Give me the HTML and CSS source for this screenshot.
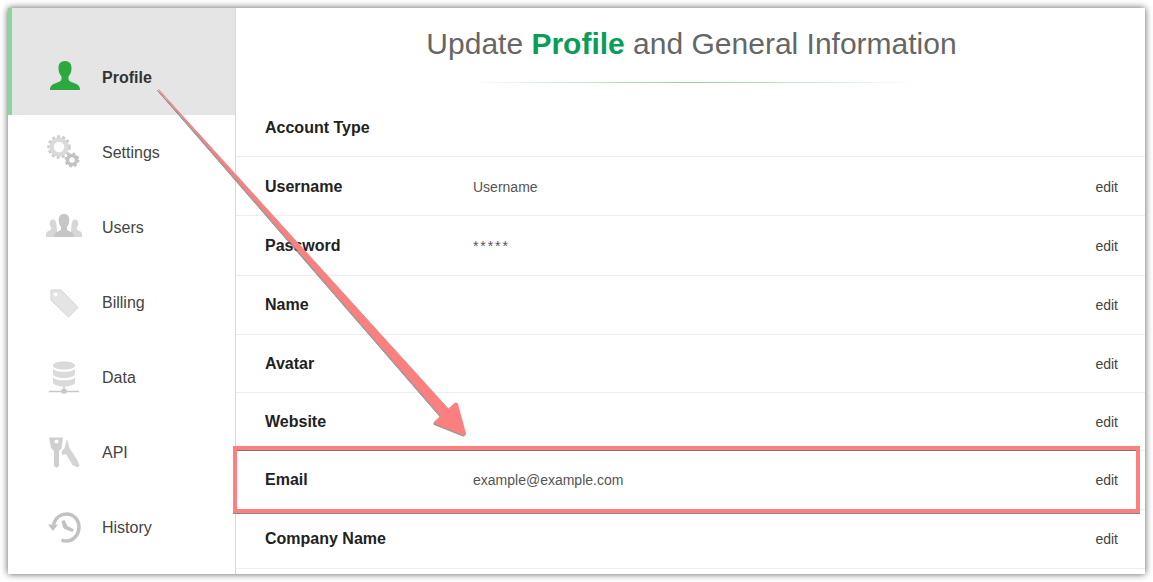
FILE: index.html
```html
<!DOCTYPE html>
<html lang="en">
<head>
    <meta charset="UTF-8">
    <meta name="viewport" content="width=device-width, initial-scale=1.0">
    <title>Update Profile</title>
    <link rel="stylesheet" href="styles.css">
</head>
<body>
    <div class="window">
        <!-- sidebar -->
        <div class="sidebar">
            <div class="nav-item active">
                <svg class="nav-icon" viewBox="0 0 36 36"><path fill="#2ca83f" d="M19 1c-4.600 0-6.500 3-6.500 7 0 3.500 1 6.500 3 8.500v2.500c0 2-2.500 3-6 4.300-3.500 1.300-5.500 2.700-5.500 6.700h30c0-4-2-5.400-5.500-6.700-3.500-1.300-6-2.300-6-4.300v-2.500c2-2 3-5 3-8.500 0-4-1.900-7-6.500-7z"/></svg>
                <span>Profile</span>
            </div>
            <div class="nav-item">
                <svg class="nav-icon" viewBox="0 0 36 36">
                    <circle cx="13" cy="12" r="7.500" fill="none" stroke="#dadada" stroke-width="4.500"/>
                    <circle cx="13" cy="12" r="10.500" fill="none" stroke="#cdcdcd" stroke-width="2.500" stroke-dasharray="3 2.250"/>
                    <circle cx="26" cy="25" r="4.500" fill="none" stroke="#c2c2c2" stroke-width="3.500"/>
                    <circle cx="26" cy="25" r="6.500" fill="none" stroke="#c2c2c2" stroke-width="2" stroke-dasharray="2.500 2.600"/>
                </svg>
                <span>Settings</span>
            </div>
            <div class="nav-item">
                <svg class="nav-icon" viewBox="0 0 36 36">
                    <path fill="#d6d6d6" d="M7 9.500c-2.300 0-3.300 1.800-3.300 3.800 0 1.800.5 3.200 1.400 4.200v1.500c0 1-1.700 1.600-3 2.200C.7 21.800 0 22.600 0 24.500V27h11v-7l-.5-5c0-3-1.500-5.500-3.500-5.500zM29 9.500c2.300 0 3.300 1.800 3.300 3.800 0 1.800-.5 3.200-1.400 4.200v1.500c0 1 1.700 1.600 3 2.200 1.400.6 2.100 1.400 2.100 3.300V27H25v-7l.5-5c0-3 1.500-5.500 3.500-5.500z"/>
                    <path fill="#c6c6c6" d="M18 4c-3.800 0-5.300 2.700-5.300 6 0 3 .8 5.300 2.300 6.800v2.200c0 1.500-2 2.100-3.800 2.900-2 .9-3.200 2-3.200 5.100h20c0-3.100-1.200-4.200-3.200-5.100-1.800-.8-3.800-1.400-3.800-2.900v-2.200c1.500-1.500 2.300-3.800 2.300-6.800 0-3.300-1.500-6-5.300-6z"/>
                </svg>
                <span>Users</span>
            </div>
            <div class="nav-item">
                <svg class="nav-icon" viewBox="0 0 36 36"><path fill="#e4e4e4" stroke="#d2d2d2" stroke-linejoin="round" d="M5 5h10l17 17.500L22.500 32 5 15z"/><circle cx="9.500" cy="9.500" r="2" fill="#fff"/></svg>
                <span>Billing</span>
            </div>
            <div class="nav-item">
                <svg class="nav-icon" viewBox="0 0 36 36">
                    <path fill="#dadada" d="M7 5.500C7 3 12 1.500 18 1.500S29 3 29 5.500 24 9.500 18 9.500 7 8 7 5.500zM7 9c2 2 6.500 2.800 11 2.800S27 11 29 9v5c0 2.300-5 4-11 4S7 16.300 7 14zM7 17.500c2 2 6.500 2.800 11 2.800s9-.8 11-2.800v5c0 2.300-5 4-11 4s-11-1.700-11-4z"/>
                    <path fill="none" stroke="#c8c8c8" stroke-width="1.500" d="M3 31.500h30M18 26v5"/>
                    <rect x="15.500" y="29" width="5" height="4.500" fill="#c8c8c8"/>
                </svg>
                <span>Data</span>
            </div>
            <div class="nav-item">
                <svg class="nav-icon" viewBox="0 0 36 36">
                    <path fill="#cfcfcf" d="M3 2.500h14l-1.500 11-2.500 2.500V31l-2.500 2L8 31V16l-3-3z"/>
                    <circle cx="10.500" cy="6.500" r="2" fill="#fff"/>
                    <path fill="#d4d4d4" d="M21 4l2.500 9 7.500 11.500 2.500 6-2 2-5-2.500-6.500-11-3.500 1-1-3.500 3-3.500z"/>
                </svg>
                <span>API</span>
            </div>
            <div class="nav-item">
                <svg class="nav-icon" viewBox="0 0 36 36">
                    <path fill="none" stroke="#c2c2c2" stroke-width="3.500" d="M7.500 14.500C9.500 7.500 15 4 20.500 4 27.500 4 33 9.700 33 17s-5.500 14-12.500 14c-2 0-3.500-.3-5-1"/>
                    <path fill="#c2c2c2" d="M2 14.500h10L7 21zM15.500 11l3-1 3 6 6.500 3.500-1.500 2.500-8-3-1.500-1.500z"/>
                </svg>
                <span>History</span>
            </div>
        </div>

        <!-- main content -->
        <div class="content">
            <div class="page-head">
                <h1>Update <b>Profile</b> and General Information</h1>
                <div class="head-line"></div>
            </div>
            <div class="row"><div class="row-label">Account Type</div></div>
            <div class="row"><div class="row-label">Username</div><div class="row-value">Username</div><a class="row-edit">edit</a></div>
            <div class="row row-tall"><div class="row-label">Password</div><div class="row-value row-stars">*****</div><a class="row-edit">edit</a></div>
            <div class="row row-up"><div class="row-label">Name</div><div class="row-value"></div><a class="row-edit">edit</a></div>
            <div class="row row-short"><div class="row-label">Avatar</div><div class="row-value"></div><a class="row-edit">edit</a></div>
            <div class="row row-short"><div class="row-label">Website</div><div class="row-value"></div><a class="row-edit">edit</a></div>
            <div class="row row-up"><div class="row-label">Email</div><div class="row-value">example@example.com</div><a class="row-edit">edit</a></div>
            <div class="row row-up"><div class="row-label">Company Name</div><div class="row-value"></div><a class="row-edit">edit</a></div>
        </div>

        <!-- annotations drawn over the screenshot -->
        <div class="mark-box"></div>
        <svg class="mark-arrow" viewBox="8 8 1137 566">
            <path fill="#fa8080" stroke="#fa8080" stroke-width="1" stroke-linejoin="round" d="M158.500 89.500 452 413 443 418z"/>
            <path fill="#fa8080" stroke="#fa8080" stroke-width="4" stroke-linejoin="round" d="M456 404.500 464 433.500 436.500 422.500z"/>
        </svg>
    </div>
</body>
</html>
```

FILE: styles.css
```css
html, body {
    height: 582px;
    margin: 0;
    overflow: hidden;
    background-color: #fff;
}
body {
    font-family: "Liberation Sans", Arial, sans-serif;
    padding: 8px;
    box-sizing: border-box;
}
.window {
    position: relative;
    display: flex;
    height: 566px;
    background-color: #fff;
    box-shadow: 0 0 7px rgba(0, 0, 0, 0.65);
    overflow: hidden;
}
.sidebar {
    width: 228px;
    flex: none;
    box-sizing: border-box;
    border-right: 1px solid #d8d8d8;
}
.nav-item {
    display: flex;
    align-items: center;
    gap: 20px;
    height: 75px;
    padding-left: 38px;
    font-size: 16px;
    color: #444;
}
.nav-item.active {
    height: 107px;
    padding-top: 32px;
    padding-left: 34px;
    box-sizing: border-box;
    border-left: 4px solid #8fd49b;
    background-color: #e5e5e5;
    font-weight: bold;
    color: #333;
}
.nav-icon {
    width: 36px;
    height: 36px;
    flex: none;
}
.content {
    flex: 1;
    min-width: 0;
}
.page-head {
    height: 90px;
    box-sizing: border-box;
    padding-top: 18px;
}
h1 {
    margin: 0;
    padding-left: 2px;
    font-size: 30px;
    line-height: 36px;
    font-weight: normal;
    text-align: center;
    color: #666;
}
h1 b {
    color: #0a9d58;
}
.head-line {
    width: 450px;
    height: 1px;
    margin: 20px auto 0;
    background: linear-gradient(to right, rgba(90, 190, 120, 0), #8ed0a2 50%, rgba(90, 190, 120, 0));
}
.row {
    display: flex;
    align-items: center;
    height: 59px;
    box-sizing: border-box;
    padding: 1px 27px 0 29px;
    border-bottom: 1px solid #eee;
    font-size: 14px;
    color: #555;
}
.row-tall {
    height: 60px;
    padding-top: 0;
}
.row-short {
    height: 58px;
}
.row-up {
    padding-top: 0;
    padding-bottom: 1px;
}
.row-label {
    width: 208px;
    flex: none;
    font-size: 16px;
    font-weight: bold;
    color: #222;
}
.row-value {
    flex: 1;
}
.row-stars {
    letter-spacing: 1.9px;
}
.row-edit {
    color: #444;
}
.mark-box {
    position: absolute;
    left: 225px;
    top: 438px;
    width: 907px;
    height: 67px;
    box-sizing: border-box;
    border: 4px solid #ff7f7f;
    box-shadow: 0 1px 0 #888, inset 0 1px 0 #777;
}
.mark-arrow {
    position: absolute;
    left: 0;
    top: 0;
    width: 1137px;
    height: 566px;
    filter: drop-shadow(-1px 1px 0.3px rgba(110, 110, 110, 0.7));
}
```
